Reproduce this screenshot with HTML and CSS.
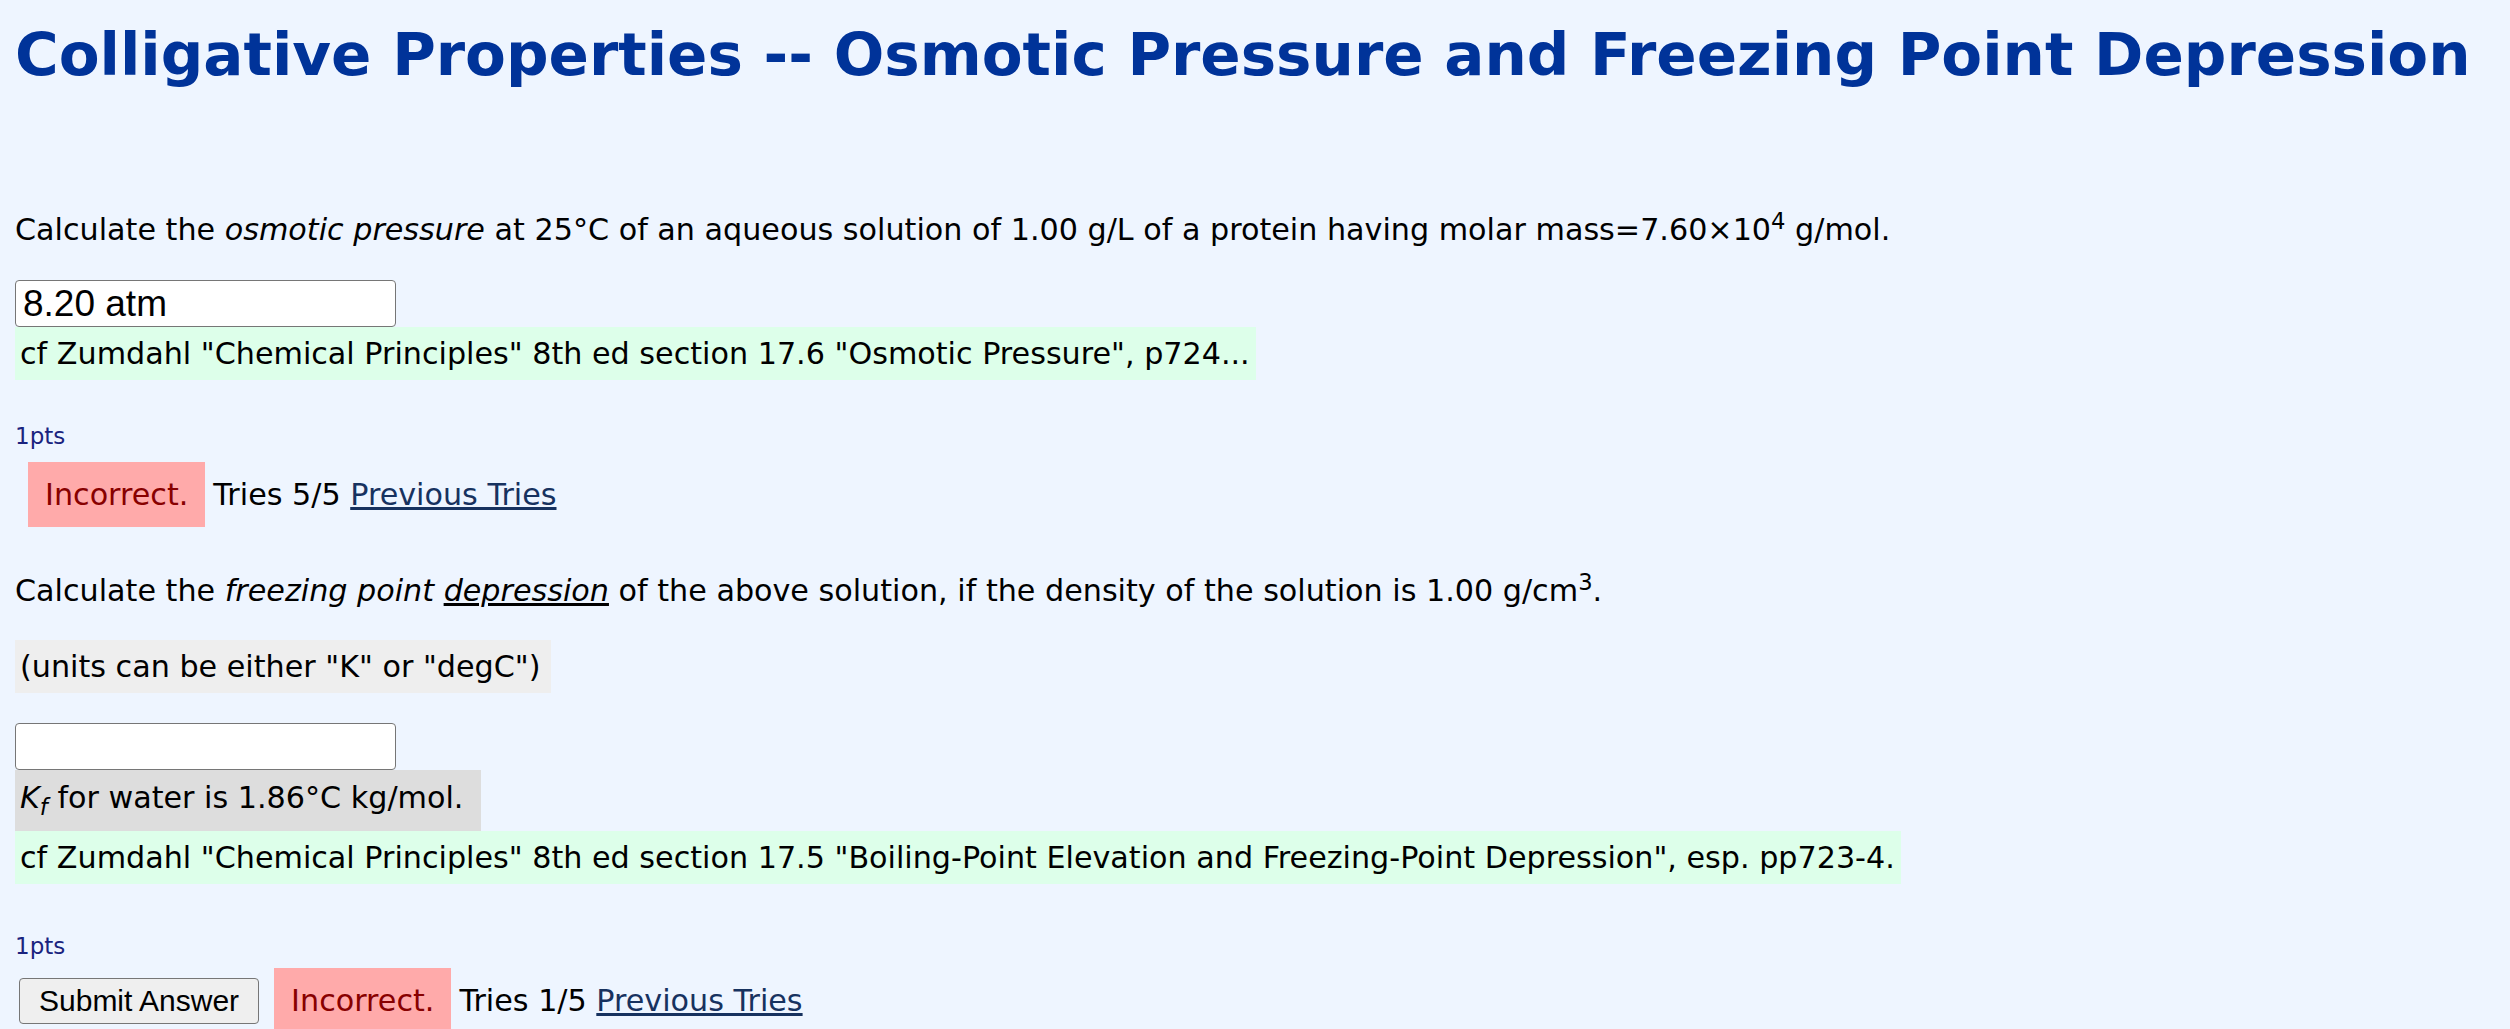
FILE: index.html
```html
<!DOCTYPE html>
<html lang="en">
<head>
  <meta charset="UTF-8">
  <meta name="viewport" content="width=device-width, initial-scale=1.0">
  <title>Colligative Properties</title>
  <link rel="stylesheet" href="styles.css">
</head>
<body>
  <div class="page">
    <h1 class="title">Colligative Properties -- Osmotic Pressure and Freezing Point Depression</h1>

    <div class="part part-one">
      <p class="question">Calculate the <i>osmotic pressure</i> at 25°C of an aqueous solution of 1.00 g/L of a protein having molar mass=7.60×10<sup>4</sup> g/mol.</p>
      <input class="answer" type="text" value="8.20 atm">
      <div class="hint">cf Zumdahl "Chemical Principles" 8th ed section 17.6 "Osmotic Pressure", p724...</div>
      <div class="pts">1pts</div>
      <div class="status">
        <span class="incorrect first">Incorrect.</span>
        <span class="tries">Tries 5/5 <a href="#">Previous Tries</a></span>
      </div>
    </div>

    <div class="part part-two">
      <p class="question">Calculate the <i>freezing point <u>depression</u></i> of the above solution, if the density of the solution is 1.00 g/cm<sup>3</sup>.</p>
      <div class="note units">(units can be either "K" or "degC")</div>
      <input class="answer" type="text" value="">
      <div class="note const"><i>K<sub>f</sub></i> for water is 1.86°C kg/mol.</div>
      <div class="hint">cf Zumdahl "Chemical Principles" 8th ed section 17.5 "Boiling-Point Elevation and Freezing-Point Depression", esp. pp723-4.</div>
      <div class="pts">1pts</div>
      <div class="status">
        <button class="submit" type="button">Submit Answer</button>
        <span class="incorrect">Incorrect.</span>
        <span class="tries">Tries 1/5 <a href="#">Previous Tries</a></span>
      </div>
    </div>
  </div>
</body>
</html>
```

FILE: styles.css
```css
*{
  box-sizing: border-box;
}
body{
  margin: 0;
  background-color: #eef5ff;
  color: #000;
  font-family: "DejaVu Sans", Verdana, sans-serif;
  font-size: 30.2px;
  line-height: 35px;
}
.page{
  padding: 0 15px;
}

.title{
  margin: 20px 0 0;
  font-size: 59.5px;
  line-height: 70px;
  font-weight: bold;
  color: #003399;
  white-space: nowrap;
}

.part-one{
  margin-top: 122px;
}
.part-two{
  margin-top: 46px;
}

.question{
  margin: 0;
  sup{
    font-size: 0.75em;
    line-height: 0;
  }
}

.answer{
  display: block;
  width: 381px;
  height: 47px;
  margin-top: 33px;
  padding: 0 7px;
  border: 1.5px solid #767676;
  border-radius: 4px;
  background: #fff;
  font-family: "Liberation Sans", Arial, sans-serif;
  font-size: 37px;
  color: #000;
}
.part-two .answer{
  margin-top: 30px;
}

/* 힌트, 보조설명 박스 */
.hint{
  display: inline-block;
  padding: 9px 6px 9px 5px;
  background-color: #ddffea;
}
.note{
  display: inline-block;
  padding: 9px 6px 9px 5px;
  &.units{
    margin-top: 32px;
    padding-right: 11px;
    background-color: #eeeeee;
  }
  &.const{
    display: block;
    width: fit-content;
    padding: 10px 18px 16px 5px;
    background-color: #dddddd;
    sub{
      font-size: 0.75em;
      line-height: 0;
    }
  }
}
.part-two .hint{
  display: block;
  width: fit-content;
}

.pts{
  margin-top: 43px;
  font-size: 23px;
  line-height: 26px;
  color: #1a237e;
}
.part-two .pts{
  margin-top: 49px;
}

.status{
  display: flex;
  align-items: center;
  margin-top: 13px;
  .incorrect{
    padding: 15px 17px;
    background-color: #ffaaaa;
    color: #880000;
    &.first{
      margin-left: 13px;
    }
  }
  .tries{
    margin-left: 8px;
  }
  a{
    color: #17325f;
  }
}
.part-two .status{
  margin-top: 9px;
}

.submit{
  height: 46px;
  margin: 0 15px 0 4px;
  padding: 0 19px;
  border: 1.5px solid #767676;
  border-radius: 4px;
  background-color: #efefef;
  font-family: "Liberation Sans", Arial, sans-serif;
  font-size: 30px;
  color: #000;
}
```
